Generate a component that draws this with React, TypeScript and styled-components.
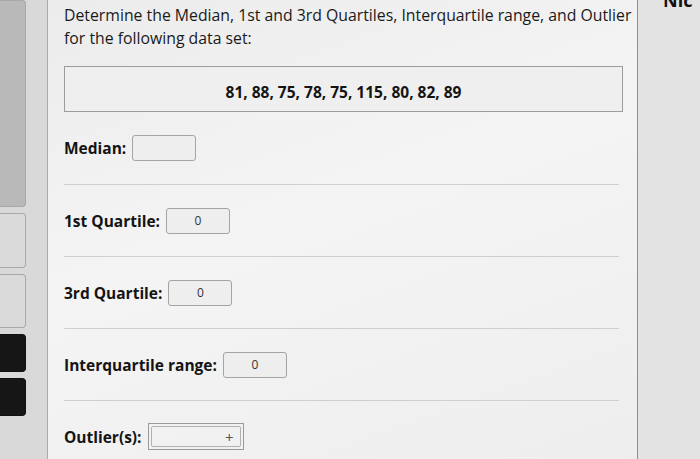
import styled, { createGlobalStyle } from "styled-components";

const GlobalStyle = createGlobalStyle`
  html, body {
    margin: 0;
    padding: 0;
    background: #e6e6e6;
    font-family: "Open Sans", "Liberation Sans", sans-serif;
    color: #141414;
  }
`;

const Screen = styled.div`
  width: 700px;
  height: 459px;
  display: flex;
  overflow: hidden;
  background: linear-gradient(180deg, #e9e9e9 0%, #ececec 50%, #e3e3e3 100%);
`;

const Sidebar = styled.aside`
  width: 47px;
  flex-shrink: 0;
  display: flex;
  border-right: 1px solid #a9a9a9;
  background: #d9d9d9;
`;

const TileColumn = styled.div`
  width: 26px;
  display: flex;
  flex-direction: column;
  gap: 6px;
`;

interface TileProps {
  $h: number;
  $dark?: boolean;
  $tall?: boolean;
}

const Tile = styled.div<TileProps>`
  height: ${(p) => p.$h}px;
  border-radius: 0 4px 4px 0;
  background: ${(p) => (p.$dark ? "#161616" : p.$tall ? "#b9b9b9" : "#dadada")};
  border: 1px solid ${(p) => (p.$dark ? "#111" : "#a8a8a8")};
  border-left: none;
  box-sizing: border-box;
`;

const Main = styled.main`
  width: 590px;
  flex-shrink: 0;
  box-sizing: border-box;
  padding: 4px 14px 0 16px;
  border-right: 1px solid #8f8f8f;
  background: linear-gradient(160deg, #ececec 0%, #f4f4f4 45%, #eeeeee 100%);
`;

const Prompt = styled.p`
  margin: 0;
  font-size: 15.8px;
  line-height: 23px;
  white-space: nowrap;
  color: #1a1a1a;
`;

const DataBox = styled.div`
  margin-top: 16px;
  height: 46px;
  border: 1px solid #9c9c9c;
  background: #efefef;
  display: flex;
  align-items: center;
  justify-content: center;
  font-weight: 700;
  font-size: 15.5px;
  padding-top: 6px;
  box-sizing: border-box;
`;

const Row = styled.div<{ $first?: boolean }>`
  display: flex;
  align-items: center;
  gap: 6px;
  height: 72px;
  border-top: ${(p) => (p.$first ? "none" : "1px solid #cfcfcf")};
  margin-right: 4px;
  box-sizing: border-box;
`;

const Label = styled.span`
  font-weight: 700;
  font-size: 15.5px;
`;

const Field = styled.div`
  width: 64px;
  height: 26px;
  border: 1px solid #a4a4a4;
  border-radius: 3px;
  background: #eeeeee;
  display: flex;
  align-items: center;
  justify-content: center;
  font-size: 12px;
  color: #333;
  box-sizing: border-box;
`;

const FieldGroup = styled.div`
  width: 96px;
  height: 27px;
  border: 1px solid #9a9a9a;
  padding: 2px;
  box-sizing: border-box;
  display: flex;
`;

const GroupInner = styled.div`
  flex: 1;
  border: 1px solid #b2b2b2;
  border-radius: 2px;
  display: flex;
  align-items: center;
  justify-content: flex-end;
  padding-right: 6px;
  font-size: 15px;
  color: #555;
`;

const RightPanel = styled.aside`
  flex: 1;
  background: #e3e3e3;
  position: relative;
  overflow: hidden;
`;

const CutName = styled.span`
  position: absolute;
  top: -12px;
  left: 25px;
  font-weight: 700;
  font-size: 18px;
  color: #111;
`;

const fields = [
  { label: "1st Quartile:", value: "0" },
  { label: "3rd Quartile:", value: "0" },
  { label: "Interquartile range:", value: "0" },
];

export default function App() {
  return (
    <>
      <GlobalStyle />
      <Screen>
        <Sidebar>
          <TileColumn>
            <Tile $h={207} $tall />
            <Tile $h={55} />
            <Tile $h={54} />
            <Tile $h={38} $dark />
            <Tile $h={38} $dark />
          </TileColumn>
        </Sidebar>
        <Main>
          <Prompt>
            Determine the Median, 1st and 3rd Quartiles, Interquartile range, and Outlier
            <br />
            for the following data set:
          </Prompt>
          <DataBox>81, 88, 75, 78, 75, 115, 80, 82, 89</DataBox>
          <Row $first>
            <Label>Median:</Label>
            <Field />
          </Row>
          {fields.map((f) => (
            <Row key={f.label}>
              <Label>{f.label}</Label>
              <Field>{f.value}</Field>
            </Row>
          ))}
          <Row>
            <Label>Outlier(s):</Label>
            <FieldGroup>
              <GroupInner>+</GroupInner>
            </FieldGroup>
          </Row>
        </Main>
        <RightPanel>
          <CutName>Nic</CutName>
        </RightPanel>
      </Screen>
    </>
  );
}
